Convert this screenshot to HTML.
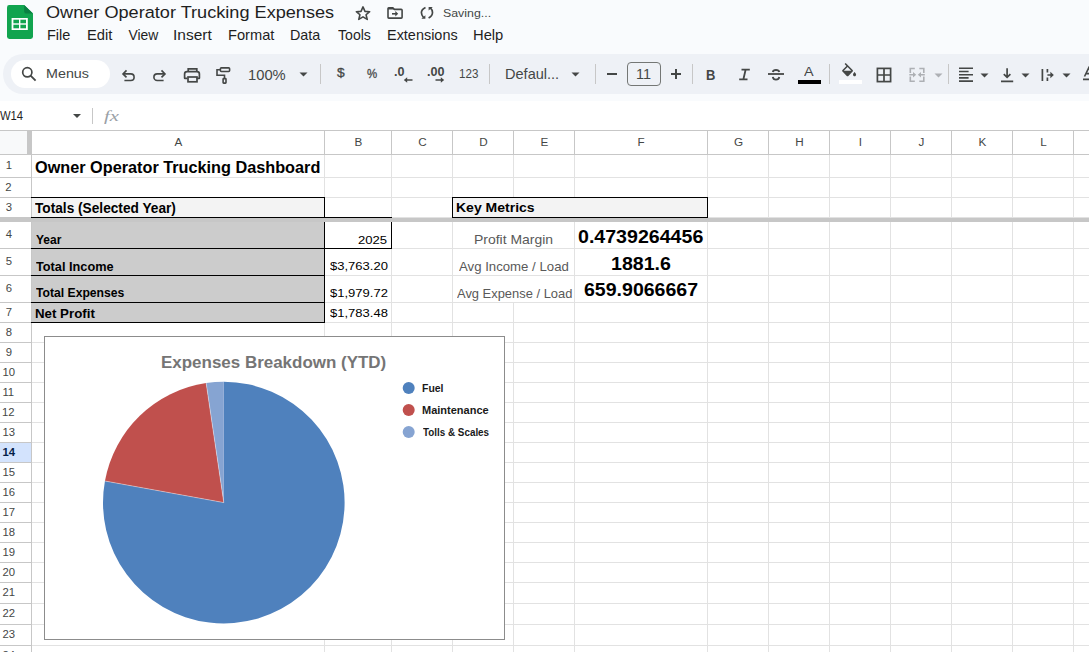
<!DOCTYPE html>
<html><head><meta charset="utf-8"><style>*{margin:0;padding:0;box-sizing:content-box}
html,body{width:1089px;height:652px;overflow:hidden;background:#f9fbfd;font-family:"Liberation Sans",sans-serif}
.t{position:absolute;white-space:nowrap;line-height:1;transform-origin:0 0}
</style></head><body>
<svg style="position:absolute;left:7px;top:5px" width="26" height="34" viewBox="0 0 26 34">
<path d="M2.2 0H17.2L26 8.6V31.6Q26 34 23.6 34H2.4Q0 34 0 31.6V2.4Q0 0 2.2 0Z" fill="#11a44f"/>
<path d="M17.2 0L26 8.6H19.4Q17.2 8.6 17.2 6.4Z" fill="#0b8043"/>
<rect x="4.6" y="13" width="16.2" height="12" fill="#fff"/>
<rect x="6.4" y="14.7" width="5.6" height="3.6" fill="#11a44f"/>
<rect x="13.4" y="14.7" width="5.6" height="3.6" fill="#11a44f"/>
<rect x="6.4" y="19.7" width="5.6" height="3.6" fill="#11a44f"/>
<rect x="13.4" y="19.7" width="5.6" height="3.6" fill="#11a44f"/>
</svg>
<div class="t" style="left:46.19px;top:4.00px;font-size:17.40px;font-weight:400;color:#1f1f1f;font-family:'Liberation Sans', sans-serif;transform:scaleX(1.0424);">Owner Operator Trucking Expenses</div>
<svg style="position:absolute;left:354px;top:5px" width="18" height="16" viewBox="0 0 18 16">
<path d="M9 1.93L10.98 6.34L15.66 6.7L12.06 9.76L13.23 14.35L9 11.83L4.77 14.35L5.94 9.76L2.34 6.7L7.02 6.34Z" fill="none" stroke="#444746" stroke-width="1.6" stroke-linejoin="round"/></svg>
<svg style="position:absolute;left:386px;top:6px" width="18" height="14" viewBox="0 0 18 14">
<path d="M2 11.3V2.6Q2 1.8 2.8 1.8H6.8L8.4 3.4H15.2Q16.1 3.4 16.1 4.3V11.2Q16.1 12.1 15.2 12.1H2.8Q2 12.1 2 11.3Z" fill="none" stroke="#444746" stroke-width="1.6"/>
<path d="M2 1.8H6.8L8.4 3.4H2Z" fill="#444746"/>
<path d="M6 7.8H10" stroke="#444746" stroke-width="1.6"/><path d="M12.2 7.8L9.3 5.1V10.5Z" fill="#444746"/></svg>
<svg style="position:absolute;left:420px;top:6px" width="14" height="14" viewBox="0 0 14 14">
<path d="M5.5 1.4Q1.4 3.4 1.4 6.6Q1.4 9.4 3.6 11.6" fill="none" stroke="#444746" stroke-width="1.7"/>
<path d="M8.6 12.1Q12.5 10 12.5 6.6Q12.5 3.6 10.3 1.8" fill="none" stroke="#444746" stroke-width="1.7"/>
<path d="M1.4 12.8L5.4 9.2V12.8Z" fill="#444746"/><path d="M12.8 1L8.6 1.1V4.6Z" fill="#444746"/></svg>
<div class="t" style="left:443.14px;top:8.00px;font-size:11.30px;font-weight:400;color:#444746;font-family:'Liberation Sans', sans-serif;transform:scaleX(1.0940);">Saving...</div>
<div class="t" style="left:47.03px;top:29.00px;font-size:13.90px;font-weight:400;color:#1f1f1f;font-family:'Liberation Sans', sans-serif;transform:scaleX(1.0438);">File</div>
<div class="t" style="left:86.75px;top:29.00px;font-size:13.90px;font-weight:400;color:#1f1f1f;font-family:'Liberation Sans', sans-serif;transform:scaleX(1.0603);">Edit</div>
<div class="t" style="left:128.41px;top:29.00px;font-size:13.90px;font-weight:400;color:#1f1f1f;font-family:'Liberation Sans', sans-serif;">View</div>
<div class="t" style="left:173.14px;top:29.00px;font-size:13.90px;font-weight:400;color:#1f1f1f;font-family:'Liberation Sans', sans-serif;transform:scaleX(1.1152);">Insert</div>
<div class="t" style="left:227.97px;top:29.00px;font-size:13.90px;font-weight:400;color:#1f1f1f;font-family:'Liberation Sans', sans-serif;transform:scaleX(1.0539);">Format</div>
<div class="t" style="left:290.12px;top:29.00px;font-size:13.90px;font-weight:400;color:#1f1f1f;font-family:'Liberation Sans', sans-serif;transform:scaleX(1.0329);">Data</div>
<div class="t" style="left:338.12px;top:29.00px;font-size:13.90px;font-weight:400;color:#1f1f1f;font-family:'Liberation Sans', sans-serif;transform:scaleX(1.0143);">Tools</div>
<div class="t" style="left:387.38px;top:29.00px;font-size:13.90px;font-weight:400;color:#1f1f1f;font-family:'Liberation Sans', sans-serif;transform:scaleX(1.0395);">Extensions</div>
<div class="t" style="left:472.63px;top:29.00px;font-size:13.90px;font-weight:400;color:#1f1f1f;font-family:'Liberation Sans', sans-serif;transform:scaleX(1.0614);">Help</div>
<div style="position:absolute;left:2.5px;top:54px;width:1200px;height:40px;border-radius:20px;background:#eef1f6"></div>
<div style="position:absolute;left:11px;top:60px;width:99px;height:28px;border-radius:14px;background:#fff"></div>
<svg style="position:absolute;left:21px;top:66px" width="16" height="16" viewBox="0 0 16 16">
<circle cx="6.3" cy="6.3" r="4.6" fill="none" stroke="#444746" stroke-width="1.7"/><path d="M9.6 9.6L14.6 14.6" stroke="#444746" stroke-width="1.8"/></svg>
<div class="t" style="left:46.16px;top:67.00px;font-size:13.60px;font-weight:400;color:#444746;font-family:'Liberation Sans', sans-serif;transform:scaleX(1.0531);">Menus</div>
<svg style="position:absolute;left:121px;top:69px" width="15" height="13" viewBox="0 0 15 13">
<path d="M3.4 11.5H9.8A3.3 3.3 0 0 0 9.8 4.9H2.2" fill="none" stroke="#444746" stroke-width="1.6"/>
<path d="M5.5 1.4L2 4.9L5.5 8.4" fill="none" stroke="#444746" stroke-width="1.6"/></svg>
<svg style="position:absolute;left:152px;top:69px" width="15" height="13" viewBox="0 0 15 13">
<path d="M11.6 11.5H5.2A3.3 3.3 0 0 1 5.2 4.9H12.8" fill="none" stroke="#444746" stroke-width="1.6"/>
<path d="M9.5 1.4L13 4.9L9.5 8.4" fill="none" stroke="#444746" stroke-width="1.6"/></svg>
<svg style="position:absolute;left:183px;top:67px" width="18" height="16" viewBox="0 0 18 16">
<path d="M5.2 4.6V1.8H13.8V4.6" fill="none" stroke="#444746" stroke-width="1.7"/>
<path d="M4.4 11.4H2Q1.6 11.4 1.6 11V7Q1.6 4.6 4 4.6H14Q16.4 4.6 16.4 7V11Q16.4 11.4 16 11.4H13.6" fill="none" stroke="#444746" stroke-width="1.7"/>
<rect x="5.0" y="10" width="9" height="4.8" fill="none" stroke="#444746" stroke-width="1.7"/></svg>
<svg style="position:absolute;left:215px;top:66px" width="17" height="19" viewBox="0 0 17 19">
<rect x="5.4" y="1.9" width="9.2" height="3.6" rx="0.9" fill="none" stroke="#444746" stroke-width="1.6"/>
<path d="M5.4 3.7H2V9.2H9.5V12.4" fill="none" stroke="#444746" stroke-width="1.6"/>
<rect x="8.1" y="12.6" width="2.9" height="4.5" rx="0.6" fill="none" stroke="#444746" stroke-width="1.6"/></svg>
<div class="t" style="left:247.95px;top:68.00px;font-size:14.50px;font-weight:400;color:#444746;font-family:'Liberation Sans', sans-serif;transform:scaleX(1.0158);">100%</div>
<svg style="position:absolute;left:298.5px;top:72.3px" width="9" height="5" viewBox="0 0 9 5"><path d="M0.5 0.5H8.5L4.5 4.5Z" fill="#444746"/></svg>
<div style="position:absolute;left:320px;top:64px;width:1px;height:20px;background:#c7c7c7"></div>
<div style="position:absolute;left:489px;top:64px;width:1px;height:20px;background:#c7c7c7"></div>
<div style="position:absolute;left:595px;top:64px;width:1px;height:20px;background:#c7c7c7"></div>
<div style="position:absolute;left:692px;top:64px;width:1px;height:20px;background:#c7c7c7"></div>
<div style="position:absolute;left:829px;top:64px;width:1px;height:20px;background:#c7c7c7"></div>
<div style="position:absolute;left:948px;top:64px;width:1px;height:20px;background:#c7c7c7"></div>
<div class="t" style="left:336.74px;top:66.00px;font-size:13.00px;font-weight:400;color:#444746;font-family:'Liberation Sans', sans-serif;transform:scaleX(1.0614);-webkit-text-stroke:0.3px #444746;">$</div>
<div class="t" style="left:366.89px;top:67.00px;font-size:13.00px;font-weight:400;color:#444746;font-family:'Liberation Sans', sans-serif;transform:scaleX(0.8785);-webkit-text-stroke:0.3px #444746;">%</div>
<div class="t" style="left:394.43px;top:67.00px;font-size:11.90px;font-weight:700;color:#444746;font-family:'Liberation Sans', sans-serif;transform:scaleX(1.0601);">.0</div>
<svg style="position:absolute;left:403px;top:77px" width="10" height="6" viewBox="0 0 10 6"><path d="M9.5 3H3" fill="none" stroke="#444746" stroke-width="1.5"/><path d="M0.8 3L4.2 0.3V5.7Z" fill="#444746"/></svg>
<div class="t" style="left:427.07px;top:67.00px;font-size:11.90px;font-weight:700;color:#444746;font-family:'Liberation Sans', sans-serif;transform:scaleX(1.0593);">.00</div>
<svg style="position:absolute;left:435px;top:77px" width="10" height="6" viewBox="0 0 10 6"><path d="M0.5 3H7" fill="none" stroke="#444746" stroke-width="1.5"/><path d="M9.2 3L5.8 0.3V5.7Z" fill="#444746"/></svg>
<div class="t" style="left:458.90px;top:68.00px;font-size:12.30px;font-weight:400;color:#444746;font-family:'Liberation Sans', sans-serif;transform:scaleX(0.9443);">123</div>
<div class="t" style="left:504.85px;top:67.00px;font-size:14.10px;font-weight:400;color:#444746;font-family:'Liberation Sans', sans-serif;transform:scaleX(1.0319);">Defaul...</div>
<svg style="position:absolute;left:571px;top:72px" width="9" height="5" viewBox="0 0 9 5"><path d="M0.5 0.5H8.5L4.5 4.5Z" fill="#444746"/></svg>
<div style="position:absolute;left:607px;top:73.2px;width:10px;height:1.8px;background:#444746"></div>
<div style="position:absolute;left:627px;top:62px;width:32px;height:22px;border:1px solid #747775;border-radius:4px"></div>
<div class="t" style="left:635.96px;top:67.00px;font-size:14.50px;font-weight:400;color:#444746;font-family:'Liberation Sans', sans-serif;">11</div>
<div style="position:absolute;left:671px;top:73.2px;width:10px;height:1.8px;background:#444746"></div>
<div style="position:absolute;left:675.1px;top:69px;width:1.8px;height:10px;background:#444746"></div>
<div class="t" style="left:706.45px;top:68.00px;font-size:14.80px;font-weight:700;color:#444746;font-family:'Liberation Sans', sans-serif;transform:scaleX(0.8772);">B</div>
<svg style="position:absolute;left:738px;top:68px" width="13" height="13" viewBox="0 0 13 13">
<path d="M3.5 1.7H11.8M1.2 11.3H9.5M7.6 1.7L5.4 11.3" fill="none" stroke="#444746" stroke-width="1.8"/></svg>
<svg style="position:absolute;left:767px;top:68px" width="18" height="14" viewBox="0 0 18 14">
<path d="M1 6H17" stroke="#444746" stroke-width="1.8"/>
<path d="M12.3 4Q11.8 2 9 2Q6.2 2 5.8 4" fill="none" stroke="#444746" stroke-width="1.8"/>
<path d="M5.8 8.8Q6.2 11.6 9 11.6Q11.8 11.6 12.3 9" fill="none" stroke="#444746" stroke-width="1.8"/></svg>
<div class="t" style="left:804.00px;top:65.00px;font-size:13.30px;font-weight:400;color:#444746;font-family:'Liberation Sans', sans-serif;transform:scaleX(1.0825);">A</div>
<div style="position:absolute;left:798px;top:80.3px;width:23.3px;height:3.7px;background:#000"></div>
<svg style="position:absolute;left:840px;top:63px" width="19" height="14" viewBox="3 0 19 18">
<g transform="scale(1)"><path d="M16.56 8.94L7.62 0 6.21 1.41l2.38 2.38-5.15 5.15c-.59.59-.59 1.54 0 2.12l5.5 5.5c.29.29.68.44 1.06.44s.77-.15 1.06-.44l5.5-5.5c.59-.58.59-1.53 0-2.12zM5.21 10L10 5.21 14.79 10H5.21zM19 11.5s-2 2.17-2 3.5c0 1.1.9 2 2 2s2-.9 2-2c0-1.33-2-3.5-2-3.5z" fill="#444746"/></g></svg>
<div style="position:absolute;left:839px;top:80.3px;width:23px;height:3.7px;background:#fff"></div>
<svg style="position:absolute;left:876px;top:67px" width="16" height="16" viewBox="0 0 16 16">
<rect x="1.4" y="1.4" width="13.2" height="13.2" fill="none" stroke="#444746" stroke-width="1.7"/>
<path d="M8 1.4V14.6M1.4 8H14.6" stroke="#444746" stroke-width="1.7"/></svg>
<svg style="position:absolute;left:908px;top:67px" width="18" height="16" viewBox="0 0 18 16">
<path d="M6.8 1.5H2.3V5.9M2.3 9.5V14.3H6.8M11.3 1.5H15.8V5.9M15.8 9.5V14.3H11.3M1.3 7.7H5.6M16.8 7.7H12.4" fill="none" stroke="#adb0b4" stroke-width="1.6"/>
<path d="M8.2 7.7L5 4.9V10.5Z M9.8 7.7L13 4.9V10.5Z" fill="#adb0b4"/></svg>
<svg style="position:absolute;left:934px;top:72.5px" width="9" height="5" viewBox="0 0 9 5"><path d="M0.5 0.5H8.5L4.5 4.5Z" fill="#adb0b4"/></svg>
<svg style="position:absolute;left:958px;top:67px" width="16" height="16" viewBox="0 0 16 16">
<path d="M1 1.3H15M1 4.5H10.6M1 7.7H15M1 10.9H10.6M1 14.1H15" stroke="#444746" stroke-width="1.6"/></svg>
<svg style="position:absolute;left:980px;top:72.5px" width="9" height="5" viewBox="0 0 9 5"><path d="M0.5 0.5H8.5L4.5 4.5Z" fill="#444746"/></svg>
<svg style="position:absolute;left:1000px;top:67px" width="15" height="16" viewBox="0 0 15 16">
<path d="M7.1 1.2V10.4M3.8 7.2L7.1 10.4L10.4 7.2M1 14.4H13.2" fill="none" stroke="#444746" stroke-width="1.7"/></svg>
<svg style="position:absolute;left:1021px;top:72.5px" width="9" height="5" viewBox="0 0 9 5"><path d="M0.5 0.5H8.5L4.5 4.5Z" fill="#444746"/></svg>
<svg style="position:absolute;left:1040px;top:68px" width="15" height="14" viewBox="0 0 15 14">
<path d="M2.4 1V13M7.4 1V4.4M7.4 9.6V13M7.4 7H12.4" fill="none" stroke="#444746" stroke-width="1.7"/>
<path d="M13.8 7L10.4 3.8V10.2Z" fill="#444746"/></svg>
<svg style="position:absolute;left:1061.5px;top:72.5px" width="9" height="5" viewBox="0 0 9 5"><path d="M0.5 0.5H8.5L4.5 4.5Z" fill="#444746"/></svg>
<svg style="position:absolute;left:1082px;top:66px" width="12" height="18" viewBox="0 0 12 18">
<path d="M2.5 10.5L6.7 1.9L10.9 10.5M3.9 7.6H9.5M1 13.4H12" fill="none" stroke="#444746" stroke-width="1.6"/></svg>
<div style="position:absolute;left:0;top:101px;width:1089px;height:29px;background:#fff"></div>
<div class="t" style="left:0.41px;top:110.00px;font-size:12.60px;font-weight:400;color:#1f1f1f;font-family:'Liberation Sans', sans-serif;transform:scaleX(0.8933);">W14</div>
<svg style="position:absolute;left:72.5px;top:114px" width="8" height="4" viewBox="0 0 8 4"><path d="M0 0H8L4 4Z" fill="#444746"/></svg>
<div style="position:absolute;left:92px;top:108px;width:1px;height:16px;background:#c7c7c7"></div>
<div class="t" style="left:104.00px;top:109.00px;font-size:14.50px;font-weight:400;color:#9aa0a6;font-family:'Liberation Serif', serif;font-style:italic;transform:scaleX(1.4228);">fx</div>
<div style="position:absolute;left:0;top:130px;width:1089px;height:522px;background:#fff"></div>
<div style="position:absolute;left:0;top:131px;width:27px;height:23px;background:#f8f9fa"></div>
<svg style="position:absolute;left:0;top:0" width="1089" height="652" shape-rendering="crispEdges"><rect x="32" y="177" width="1057" height="1" fill="#e2e2e2"/><rect x="32" y="197" width="1057" height="1" fill="#e2e2e2"/><rect x="32" y="217" width="1057" height="1" fill="#e2e2e2"/><rect x="32" y="248" width="1057" height="1" fill="#e2e2e2"/><rect x="32" y="275" width="1057" height="1" fill="#e2e2e2"/><rect x="32" y="302" width="1057" height="1" fill="#e2e2e2"/><rect x="32" y="322" width="1057" height="1" fill="#e2e2e2"/><rect x="32" y="342" width="1057" height="1" fill="#e2e2e2"/><rect x="32" y="362" width="1057" height="1" fill="#e2e2e2"/><rect x="32" y="382" width="1057" height="1" fill="#e2e2e2"/><rect x="32" y="402" width="1057" height="1" fill="#e2e2e2"/><rect x="32" y="422" width="1057" height="1" fill="#e2e2e2"/><rect x="32" y="442" width="1057" height="1" fill="#e2e2e2"/><rect x="32" y="462" width="1057" height="1" fill="#e2e2e2"/><rect x="32" y="482" width="1057" height="1" fill="#e2e2e2"/><rect x="32" y="502" width="1057" height="1" fill="#e2e2e2"/><rect x="32" y="522" width="1057" height="1" fill="#e2e2e2"/><rect x="32" y="542" width="1057" height="1" fill="#e2e2e2"/><rect x="32" y="562" width="1057" height="1" fill="#e2e2e2"/><rect x="32" y="582" width="1057" height="1" fill="#e2e2e2"/><rect x="32" y="603" width="1057" height="1" fill="#e2e2e2"/><rect x="32" y="624" width="1057" height="1" fill="#e2e2e2"/><rect x="32" y="645" width="1057" height="1" fill="#e2e2e2"/><rect x="32" y="666" width="1057" height="1" fill="#e2e2e2"/><rect x="324" y="155" width="1" height="497" fill="#e2e2e2"/><rect x="391" y="155" width="1" height="497" fill="#e2e2e2"/><rect x="452" y="155" width="1" height="497" fill="#e2e2e2"/><rect x="513" y="155" width="1" height="497" fill="#e2e2e2"/><rect x="574" y="155" width="1" height="497" fill="#e2e2e2"/><rect x="707" y="155" width="1" height="497" fill="#e2e2e2"/><rect x="768" y="155" width="1" height="497" fill="#e2e2e2"/><rect x="829" y="155" width="1" height="497" fill="#e2e2e2"/><rect x="890" y="155" width="1" height="497" fill="#e2e2e2"/><rect x="951" y="155" width="1" height="497" fill="#e2e2e2"/><rect x="1012" y="155" width="1" height="497" fill="#e2e2e2"/><rect x="1073" y="155" width="1" height="497" fill="#e2e2e2"/><rect x="0" y="130" width="1089" height="1" fill="#c7c7c7"/><rect x="0" y="154" width="1089" height="1" fill="#c7c7c7"/><rect x="324" y="131" width="1" height="23" fill="#c7c7c7"/><rect x="391" y="131" width="1" height="23" fill="#c7c7c7"/><rect x="452" y="131" width="1" height="23" fill="#c7c7c7"/><rect x="513" y="131" width="1" height="23" fill="#c7c7c7"/><rect x="574" y="131" width="1" height="23" fill="#c7c7c7"/><rect x="707" y="131" width="1" height="23" fill="#c7c7c7"/><rect x="768" y="131" width="1" height="23" fill="#c7c7c7"/><rect x="829" y="131" width="1" height="23" fill="#c7c7c7"/><rect x="890" y="131" width="1" height="23" fill="#c7c7c7"/><rect x="951" y="131" width="1" height="23" fill="#c7c7c7"/><rect x="1012" y="131" width="1" height="23" fill="#c7c7c7"/><rect x="1073" y="131" width="1" height="23" fill="#c7c7c7"/><rect x="27" y="131" width="4" height="23" fill="#c7c7c7"/><rect x="31" y="131" width="1" height="521" fill="#c7c7c7"/><rect x="0" y="177" width="31" height="1" fill="#c7c7c7"/><rect x="0" y="197" width="31" height="1" fill="#c7c7c7"/><rect x="0" y="217" width="31" height="1" fill="#c7c7c7"/><rect x="0" y="248" width="31" height="1" fill="#c7c7c7"/><rect x="0" y="275" width="31" height="1" fill="#c7c7c7"/><rect x="0" y="302" width="31" height="1" fill="#c7c7c7"/><rect x="0" y="322" width="31" height="1" fill="#c7c7c7"/><rect x="0" y="342" width="31" height="1" fill="#c7c7c7"/><rect x="0" y="362" width="31" height="1" fill="#c7c7c7"/><rect x="0" y="382" width="31" height="1" fill="#c7c7c7"/><rect x="0" y="402" width="31" height="1" fill="#c7c7c7"/><rect x="0" y="422" width="31" height="1" fill="#c7c7c7"/><rect x="0" y="442" width="31" height="1" fill="#c7c7c7"/><rect x="0" y="462" width="31" height="1" fill="#c7c7c7"/><rect x="0" y="482" width="31" height="1" fill="#c7c7c7"/><rect x="0" y="502" width="31" height="1" fill="#c7c7c7"/><rect x="0" y="522" width="31" height="1" fill="#c7c7c7"/><rect x="0" y="542" width="31" height="1" fill="#c7c7c7"/><rect x="0" y="562" width="31" height="1" fill="#c7c7c7"/><rect x="0" y="582" width="31" height="1" fill="#c7c7c7"/><rect x="0" y="603" width="31" height="1" fill="#c7c7c7"/><rect x="0" y="624" width="31" height="1" fill="#c7c7c7"/><rect x="0" y="645" width="31" height="1" fill="#c7c7c7"/><rect x="0" y="666" width="31" height="1" fill="#c7c7c7"/><rect x="0" y="218" width="1089" height="4" fill="#c7c7c7"/><rect x="0" y="443" width="31" height="19" fill="#d3e3fd"/></svg>
<div class="t" style="left:174.58px;top:136.00px;font-size:11.70px;font-weight:400;color:#444746;font-family:'Liberation Sans', sans-serif;">A</div>
<div class="t" style="left:354.61px;top:136.00px;font-size:11.70px;font-weight:400;color:#444746;font-family:'Liberation Sans', sans-serif;">B</div>
<div class="t" style="left:418.29px;top:136.00px;font-size:11.70px;font-weight:400;color:#444746;font-family:'Liberation Sans', sans-serif;">C</div>
<div class="t" style="left:479.29px;top:136.00px;font-size:11.70px;font-weight:400;color:#444746;font-family:'Liberation Sans', sans-serif;">D</div>
<div class="t" style="left:540.61px;top:136.00px;font-size:11.70px;font-weight:400;color:#444746;font-family:'Liberation Sans', sans-serif;">E</div>
<div class="t" style="left:637.43px;top:136.00px;font-size:11.70px;font-weight:400;color:#444746;font-family:'Liberation Sans', sans-serif;">F</div>
<div class="t" style="left:733.94px;top:136.00px;font-size:11.70px;font-weight:400;color:#444746;font-family:'Liberation Sans', sans-serif;">G</div>
<div class="t" style="left:795.29px;top:136.00px;font-size:11.70px;font-weight:400;color:#444746;font-family:'Liberation Sans', sans-serif;">H</div>
<div class="t" style="left:858.86px;top:136.00px;font-size:11.70px;font-weight:400;color:#444746;font-family:'Liberation Sans', sans-serif;">I</div>
<div class="t" style="left:918.58px;top:136.00px;font-size:11.70px;font-weight:400;color:#444746;font-family:'Liberation Sans', sans-serif;">J</div>
<div class="t" style="left:978.61px;top:136.00px;font-size:11.70px;font-weight:400;color:#444746;font-family:'Liberation Sans', sans-serif;">K</div>
<div class="t" style="left:1040.25px;top:136.00px;font-size:11.70px;font-weight:400;color:#444746;font-family:'Liberation Sans', sans-serif;">L</div>
<div class="t" style="left:5.66px;top:160.00px;font-size:11.30px;font-weight:400;color:#444746;font-family:'Liberation Sans', sans-serif;">1</div>
<div class="t" style="left:5.16px;top:182.00px;font-size:11.30px;font-weight:400;color:#444746;font-family:'Liberation Sans', sans-serif;">2</div>
<div class="t" style="left:5.66px;top:202.00px;font-size:11.30px;font-weight:400;color:#444746;font-family:'Liberation Sans', sans-serif;">3</div>
<div class="t" style="left:5.66px;top:229.00px;font-size:11.30px;font-weight:400;color:#444746;font-family:'Liberation Sans', sans-serif;">4</div>
<div class="t" style="left:5.66px;top:256.00px;font-size:11.30px;font-weight:400;color:#444746;font-family:'Liberation Sans', sans-serif;">5</div>
<div class="t" style="left:5.66px;top:283.00px;font-size:11.30px;font-weight:400;color:#444746;font-family:'Liberation Sans', sans-serif;">6</div>
<div class="t" style="left:5.66px;top:307.00px;font-size:11.30px;font-weight:400;color:#444746;font-family:'Liberation Sans', sans-serif;">7</div>
<div class="t" style="left:5.66px;top:327.00px;font-size:11.30px;font-weight:400;color:#444746;font-family:'Liberation Sans', sans-serif;">8</div>
<div class="t" style="left:5.66px;top:347.00px;font-size:11.30px;font-weight:400;color:#444746;font-family:'Liberation Sans', sans-serif;">9</div>
<div class="t" style="left:2.53px;top:367.00px;font-size:11.30px;font-weight:400;color:#444746;font-family:'Liberation Sans', sans-serif;">10</div>
<div class="t" style="left:2.42px;top:387.00px;font-size:11.30px;font-weight:400;color:#444746;font-family:'Liberation Sans', sans-serif;">11</div>
<div class="t" style="left:2.03px;top:407.00px;font-size:11.30px;font-weight:400;color:#444746;font-family:'Liberation Sans', sans-serif;">12</div>
<div class="t" style="left:2.53px;top:427.00px;font-size:11.30px;font-weight:400;color:#444746;font-family:'Liberation Sans', sans-serif;">13</div>
<div class="t" style="left:2.53px;top:447.00px;font-size:11.30px;font-weight:700;color:#041e49;font-family:'Liberation Sans', sans-serif;">14</div>
<div class="t" style="left:2.53px;top:467.00px;font-size:11.30px;font-weight:400;color:#444746;font-family:'Liberation Sans', sans-serif;">15</div>
<div class="t" style="left:2.53px;top:487.00px;font-size:11.30px;font-weight:400;color:#444746;font-family:'Liberation Sans', sans-serif;">16</div>
<div class="t" style="left:2.53px;top:507.00px;font-size:11.30px;font-weight:400;color:#444746;font-family:'Liberation Sans', sans-serif;">17</div>
<div class="t" style="left:2.53px;top:527.00px;font-size:11.30px;font-weight:400;color:#444746;font-family:'Liberation Sans', sans-serif;">18</div>
<div class="t" style="left:2.53px;top:547.00px;font-size:11.30px;font-weight:400;color:#444746;font-family:'Liberation Sans', sans-serif;">19</div>
<div class="t" style="left:2.53px;top:567.00px;font-size:11.30px;font-weight:400;color:#444746;font-family:'Liberation Sans', sans-serif;">20</div>
<div class="t" style="left:2.53px;top:587.00px;font-size:11.30px;font-weight:400;color:#444746;font-family:'Liberation Sans', sans-serif;">21</div>
<div class="t" style="left:2.53px;top:608.00px;font-size:11.30px;font-weight:400;color:#444746;font-family:'Liberation Sans', sans-serif;">22</div>
<div class="t" style="left:2.53px;top:629.00px;font-size:11.30px;font-weight:400;color:#444746;font-family:'Liberation Sans', sans-serif;">23</div>
<div class="t" style="left:2.53px;top:650.00px;font-size:11.30px;font-weight:400;color:#444746;font-family:'Liberation Sans', sans-serif;">24</div>
<svg style="position:absolute;left:0;top:0" width="1089" height="652" shape-rendering="crispEdges"><rect x="32" y="198" width="292" height="19" fill="#f3f3f3"/><rect x="453" y="198" width="254" height="19" fill="#f3f3f3"/><rect x="32" y="222" width="292" height="100" fill="#cccccc"/><rect x="513" y="222" width="1" height="26" fill="#ffffff"/><rect x="513" y="249" width="1" height="26" fill="#ffffff"/><rect x="513" y="276" width="1" height="26" fill="#ffffff"/><rect x="31" y="197" width="293" height="1" fill="#000"/><rect x="31" y="217" width="361" height="1" fill="#000"/><rect x="324" y="197" width="1" height="21" fill="#000"/><rect x="452" y="197" width="256" height="1" fill="#000"/><rect x="452" y="217" width="256" height="1" fill="#000"/><rect x="452" y="197" width="1" height="21" fill="#000"/><rect x="707" y="197" width="1" height="21" fill="#000"/><rect x="31" y="248" width="361" height="1" fill="#000"/><rect x="31" y="275" width="294" height="1" fill="#000"/><rect x="31" y="302" width="294" height="1" fill="#000"/><rect x="31" y="322" width="294" height="1" fill="#000"/><rect x="324" y="222" width="1" height="101" fill="#000"/><rect x="391" y="222" width="1" height="27" fill="#000"/></svg>
<div class="t" style="left:34.89px;top:159.00px;font-size:16.40px;font-weight:700;color:#000;font-family:'Liberation Sans', sans-serif;transform:scaleX(0.9914);">Owner Operator Trucking Dashboard</div>
<div class="t" style="left:35.20px;top:201.00px;font-size:14.20px;font-weight:700;color:#000;font-family:'Liberation Sans', sans-serif;transform:scaleX(0.9641);">Totals (Selected Year)</div>
<div class="t" style="left:455.79px;top:201.00px;font-size:13.30px;font-weight:700;color:#000;font-family:'Liberation Sans', sans-serif;transform:scaleX(1.0531);">Key Metrics</div>
<div class="t" style="left:35.59px;top:235.00px;font-size:11.90px;font-weight:700;color:#000;font-family:'Liberation Sans', sans-serif;transform:scaleX(1.0099);">Year</div>
<div class="t" style="left:35.90px;top:262.00px;font-size:11.90px;font-weight:700;color:#000;font-family:'Liberation Sans', sans-serif;transform:scaleX(1.0713);">Total Income</div>
<div class="t" style="left:35.90px;top:288.00px;font-size:11.90px;font-weight:700;color:#000;font-family:'Liberation Sans', sans-serif;transform:scaleX(1.0233);">Total Expenses</div>
<div class="t" style="left:34.87px;top:309.00px;font-size:11.90px;font-weight:700;color:#000;font-family:'Liberation Sans', sans-serif;transform:scaleX(1.1176);">Net Profit</div>
<div class="t" style="left:357.55px;top:234.00px;font-size:11.60px;font-weight:400;color:#000;font-family:'Liberation Sans', sans-serif;transform:scaleX(1.1300);">2025</div>
<div class="t" style="left:329.80px;top:260.00px;font-size:11.60px;font-weight:400;color:#000;font-family:'Liberation Sans', sans-serif;transform:scaleX(1.1219);">$3,763.20</div>
<div class="t" style="left:329.81px;top:287.00px;font-size:11.60px;font-weight:400;color:#000;font-family:'Liberation Sans', sans-serif;transform:scaleX(1.1219);">$1,979.72</div>
<div class="t" style="left:329.80px;top:307.00px;font-size:11.60px;font-weight:400;color:#000;font-family:'Liberation Sans', sans-serif;transform:scaleX(1.1219);">$1,783.48</div>
<div class="t" style="left:474.28px;top:233.00px;font-size:13.50px;font-weight:400;color:#595959;font-family:'Liberation Sans', sans-serif;transform:scaleX(1.0339);">Profit Margin</div>
<div class="t" style="left:458.60px;top:260.00px;font-size:13.50px;font-weight:400;color:#595959;font-family:'Liberation Sans', sans-serif;transform:scaleX(0.9776);">Avg Income / Load</div>
<div class="t" style="left:456.81px;top:287.00px;font-size:13.50px;font-weight:400;color:#595959;font-family:'Liberation Sans', sans-serif;transform:scaleX(0.9568);">Avg Expense / Load</div>
<div class="t" style="left:577.69px;top:228.00px;font-size:18.40px;font-weight:700;color:#000;font-family:'Liberation Sans', sans-serif;transform:scaleX(1.0651);">0.4739264456</div>
<div class="t" style="left:611.27px;top:255.00px;font-size:18.40px;font-weight:700;color:#000;font-family:'Liberation Sans', sans-serif;transform:scaleX(1.0647);">1881.6</div>
<div class="t" style="left:583.87px;top:281.00px;font-size:18.40px;font-weight:700;color:#000;font-family:'Liberation Sans', sans-serif;transform:scaleX(1.0622);">659.9066667</div>
<div style="position:absolute;left:44px;top:336px;width:459px;height:302px;border:1px solid #8c8c8c;background:#fff"></div>
<div class="t" style="left:161.19px;top:354.00px;font-size:17.40px;font-weight:700;color:#757575;font-family:'Liberation Sans', sans-serif;transform:scaleX(0.9751);">Expenses Breakdown (YTD)</div>
<svg style="position:absolute;left:0;top:0" width="1089" height="652"><path d="M223.80 502.60L223.80 381.80A120.8 120.8 0 1 1 104.95 481.00Z" fill="#4f81bd"/><path d="M223.80 502.60L104.95 481.00A120.8 120.8 0 0 1 206.15 383.10Z" fill="#c0504d"/><path d="M223.80 502.60L206.15 383.10A120.8 120.8 0 0 1 223.80 381.80Z" fill="#86a4d2"/><path d="M223.80 502.60L104.95 481.00" stroke="#fff" stroke-opacity="0.55" stroke-width="0.7"/><path d="M223.80 502.60L206.15 383.10" stroke="#fff" stroke-opacity="0.55" stroke-width="0.7"/><circle cx="408.7" cy="388" r="6" fill="#4f81bd"/><circle cx="408.7" cy="409.9" r="6" fill="#c0504d"/><circle cx="408.7" cy="431.9" r="6" fill="#86a4d2"/></svg>
<div class="t" style="left:421.63px;top:383.00px;font-size:11.40px;font-weight:700;color:#1a1a1a;font-family:'Liberation Sans', sans-serif;transform:scaleX(0.9176);">Fuel</div>
<div class="t" style="left:421.66px;top:405.00px;font-size:11.40px;font-weight:700;color:#1a1a1a;font-family:'Liberation Sans', sans-serif;transform:scaleX(0.9657);">Maintenance</div>
<div class="t" style="left:422.70px;top:427.00px;font-size:11.40px;font-weight:700;color:#1a1a1a;font-family:'Liberation Sans', sans-serif;transform:scaleX(0.8649);">Tolls &amp; Scales</div>
</body></html>
